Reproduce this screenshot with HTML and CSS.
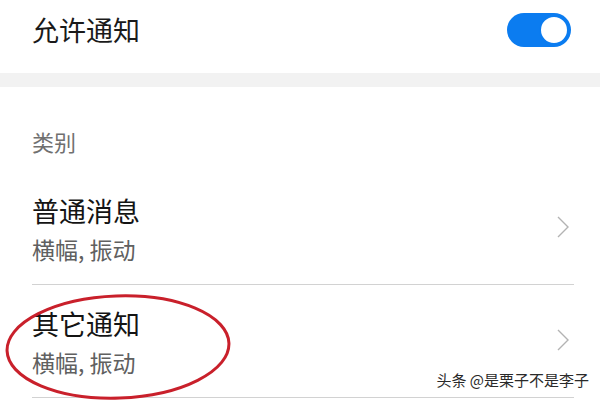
FILE: index.html
```html
<!DOCTYPE html>
<html lang="zh-CN">
<head>
<meta charset="utf-8">
<title>通知管理</title>
<link rel="stylesheet" href="styles.css">
</head>
<body>
<div class="page">
	<div class="allow_row">
		<span class="allow_title">允许通知</span>
		<span class="switch on"><span class="knob"></span></span>
	</div>
	<div class="gap"></div>

	<div class="group_label">类别</div>
	<ul class="list">
		<li class="item">
			<div class="item_text">
				<p class="item_title">普通消息</p>
				<p class="item_sub">横幅, 振动</p>
			</div>
			<svg class="chevron" width="14" height="24" viewBox="0 0 14 24"><path d="M2 2 L12 12 L2 22" fill="none" stroke="#b3b3b3" stroke-width="1.4"/></svg>
		</li>
		<li class="item">
			<div class="item_text">
				<p class="item_title">其它通知</p>
				<p class="item_sub">横幅, 振动</p>
			</div>
			<svg class="chevron" width="14" height="24" viewBox="0 0 14 24"><path d="M2 2 L12 12 L2 22" fill="none" stroke="#b3b3b3" stroke-width="1.4"/></svg>
		</li>
	</ul>

	<!-- 빨간 동그라미 표시 -->
	<svg class="mark" width="250" height="115" viewBox="0 0 250 115">
		<ellipse cx="118" cy="62" rx="111" ry="51" transform="rotate(-2 118 62)" fill="none" stroke="#c9202b" stroke-width="3"/>
	</svg>
	<div class="watermark">头条 @是栗子不是李子</div>
</div>
</body>
</html>
```

FILE: styles.css
```css
* {margin:0; padding:0; box-sizing:border-box}
li {list-style:none}
body {
	background:#fff;
	font-family:"Noto Sans CJK SC", "Noto Sans", sans-serif;
	color:#1a1a1a;
	overflow:hidden;
}

.page {
	position:relative;
	width:600px;
	height:400px;
}

.allow_row {
	display:flex;
	justify-content:space-between;
	align-items:center;
	height:73px;
	padding:12px 29px 25px 32px;
}
.allow_title {
	font-size:27px;
	line-height:36px;
}
.switch {
	display:flex;
	justify-content:flex-end;
	width:64px;
	height:34px;
	padding:2px;
	border-radius:17px;
	background:#0b7cf0;
}
.knob {
	width:30px;
	height:30px;
	border-radius:50%;
	background:#fff;
	border:2px solid #0b7cf0;
}

.gap {
	height:14px;
	background:#f2f2f2;
}

.group_label {
	height:85px;
	padding:39px 0 0 32px;
	font-size:22px;
	line-height:30px;
	color:#707070;
}

.item {
	display:flex;
	align-items:center;
	justify-content:space-between;
	height:113px;
	margin:0 26px 0 32px;
	padding:0 4px 0 0;
	border-bottom:1px solid #d2d2d2;
}
.item_title {
	font-size:27px;
	line-height:36px;
	color:#141414;
}
.item_sub {
	margin-top:5px;
	font-size:23px;
	line-height:30px;
	color:#606060;
}
.chevron {
	margin-top:-2px;
}

.mark {
	position:absolute;
	left:0;
	top:285px;
}
.watermark {
	position:absolute;
	right:11px;
	top:370px;
	font-size:15px;
	line-height:20px;
	color:#2a2a2a;
	text-shadow:0 0 2px #fff, 0 0 2px #fff;
}
```
